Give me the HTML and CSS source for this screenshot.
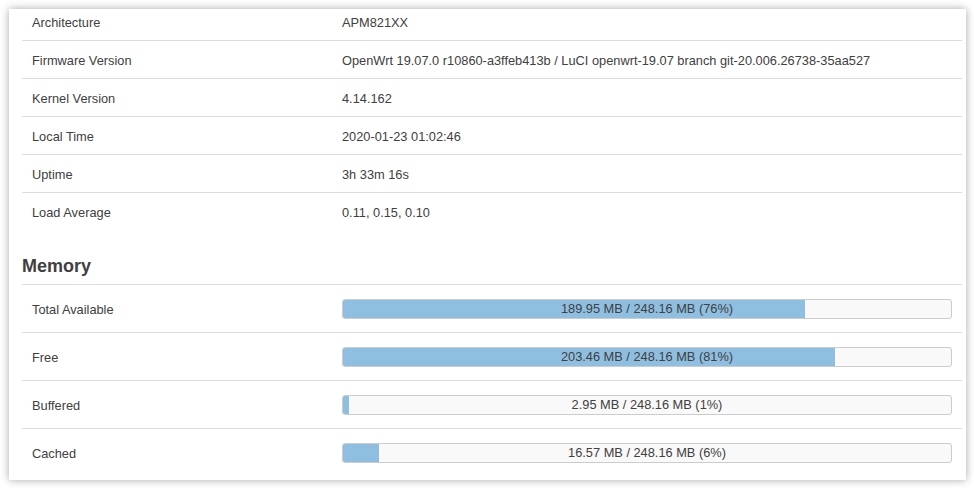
FILE: index.html
```html
<!DOCTYPE html>
<html lang="en">
<head>
    <meta charset="UTF-8">
    <meta name="viewport" content="width=device-width, initial-scale=1.0">
    <title>Status - Overview</title>
    <link rel="stylesheet" href="styles.css">
</head>
<body>
    <div class="card">
        <!-- System info -->
        <div class="table">
            <div class="row first">
                <div class="key">Architecture</div>
                <div class="val">APM821XX</div>
            </div>
            <div class="row">
                <div class="key">Firmware Version</div>
                <div class="val">OpenWrt 19.07.0 r10860-a3ffeb413b / LuCI openwrt-19.07 branch git-20.006.26738-35aa527</div>
            </div>
            <div class="row">
                <div class="key">Kernel Version</div>
                <div class="val">4.14.162</div>
            </div>
            <div class="row">
                <div class="key">Local Time</div>
                <div class="val">2020-01-23 01:02:46</div>
            </div>
            <div class="row">
                <div class="key">Uptime</div>
                <div class="val">3h 33m 16s</div>
            </div>
            <div class="row">
                <div class="key">Load Average</div>
                <div class="val">0.11, 0.15, 0.10</div>
            </div>
        </div>

        <h3>Memory</h3>
        <div class="table mem">
            <div class="row">
                <div class="key">Total Available</div>
                <div class="val">
                    <div class="bar"><div class="fill" style="width: 76%"></div><span>189.95 MB / 248.16 MB (76%)</span></div>
                </div>
            </div>
            <div class="row">
                <div class="key">Free</div>
                <div class="val">
                    <div class="bar"><div class="fill" style="width: 81%"></div><span>203.46 MB / 248.16 MB (81%)</span></div>
                </div>
            </div>
            <div class="row">
                <div class="key">Buffered</div>
                <div class="val">
                    <div class="bar"><div class="fill" style="width: 1%"></div><span>2.95 MB / 248.16 MB (1%)</span></div>
                </div>
            </div>
            <div class="row">
                <div class="key">Cached</div>
                <div class="val">
                    <div class="bar"><div class="fill" style="width: 6%"></div><span>16.57 MB / 248.16 MB (6%)</span></div>
                </div>
            </div>
        </div>
    </div>
</body>
</html>
```

FILE: styles.css
```css
body {
    margin: 0;
    font-family: "Liberation Sans", Arial, sans-serif;
    font-size: 12.8px;
    color: #404040;
    background: #fff;
}
.card {
    margin: 9px 8px 8px 9px;
    padding: 0 4px 4px 13px;
    background: #fff;
    box-shadow: 0 0 8px rgba(0, 0, 0, 0.35);
}
.row {
    display: flex;
    align-items: center;
    height: 37px;
    padding-top: 1px;
    box-sizing: border-box;
    height: 38px;
    border-top: 1px solid #ddd;
}
.row.first {
    border-top: none;
    height: 31px;
    padding-top: 0;
    padding-bottom: 5px;
}
.key {
    width: 300px;
    padding: 0 10px;
    flex-shrink: 0;
}
.val {
    flex: 1;
    padding-right: 10px;
}
h3 {
    margin: 0;
    padding: 24px 0 6px 0;
    font-size: 18px;
    line-height: 24px;
    font-weight: bold;
    color: #404040;
}
.mem .row {
    height: 48px;
}
.bar {
    position: relative;
    height: 18px;
    border: 1px solid #ccc;
    border-radius: 3px;
    background: #f9f9f9;
    overflow: hidden;
}
.fill {
    height: 100%;
    background: #8fbfe0;
}
.bar span {
    position: absolute;
    left: 0;
    right: 0;
    top: 0;
    line-height: 18px;
    text-align: center;
    color: #404040;
}
```
